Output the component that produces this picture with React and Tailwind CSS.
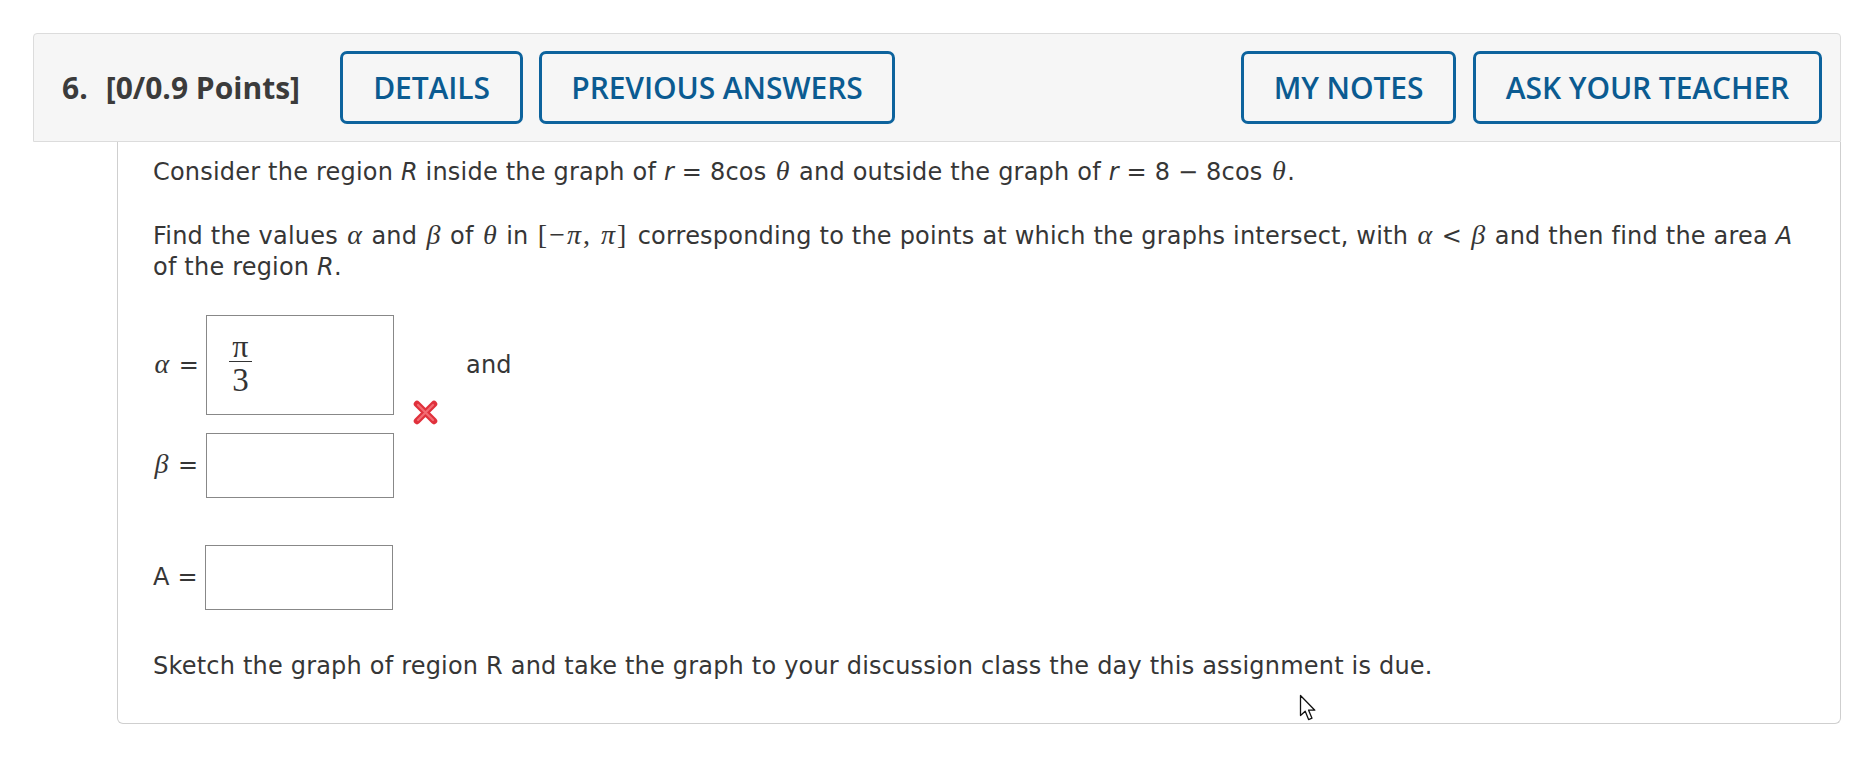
import React from "react";

const SANS = "font-['Open_Sans',sans-serif]";
const BODY = "font-['DejaVu_Sans','Verdana',sans-serif]";
const SERIF = "font-['Liberation_Serif','DejaVu_Serif',serif]";

function M({ children }) {
  return <i className={`${SERIF} mx-[1.5px] text-[28px] leading-none`}>{children}</i>;
}

function HeaderButton({ width, children }) {
  return (
    <button
      className={`${width} h-[73px] shrink-0 rounded-[7px] border-[3px] border-[#0d639d] bg-transparent text-[30px] font-semibold tracking-[-0.1px] text-[#0b5b91]`}
    >
      {children}
    </button>
  );
}

function AnswerBox({ height, children }) {
  return (
    <div className={`w-[188px] ${height} shrink-0 border border-[#888] bg-white flex items-center pl-[22px]`}>
      {children}
    </div>
  );
}

function WrongMark() {
  return (
    <svg width="27" height="25" viewBox="0 0 27 25" className="self-end -mb-[10px] ml-[18px]">
      <path d="M5 4 L22 21 M22 4 L5 21" stroke="#e0313c" strokeWidth="6.5" strokeLinecap="round" />
      <path d="M6 5 L21 20 M21 5 L6 20" stroke="#f26b72" strokeWidth="2.2" strokeLinecap="round" />
    </svg>
  );
}

function Cursor() {
  return (
    <svg width="19" height="29" viewBox="0 0 19 29" className="absolute left-[1181px] top-[552px]">
      <path
        d="M1.5 1.5 L1.5 21.5 L6.2 17.3 L9.6 25.6 L13 24.2 L9.6 16.2 L15.8 16.2 Z"
        fill="#fff"
        stroke="#111"
        strokeWidth="1.3"
        strokeLinejoin="round"
      />
    </svg>
  );
}

export default function App() {
  return (
    <div className="min-h-[757px] bg-white pt-[33px] pl-[33px] pr-[19px]">
      <div className={`h-[109px] rounded-t-[4px] border border-[#dcdcdc] bg-[#f6f6f6] flex items-center pl-[28px] pr-[18px] ${SANS}`}>
        <div className="text-[30px] font-bold text-[#3b3b3b] whitespace-nowrap">
          6.<span className="ml-[18px]">[0/0.9 Points]</span>
        </div>
        <div className="ml-[40px] flex gap-[16px]">
          <HeaderButton width="w-[183px]">DETAILS</HeaderButton>
          <HeaderButton width="w-[356px]">PREVIOUS ANSWERS</HeaderButton>
        </div>
        <div className="ml-auto flex gap-[17px]">
          <HeaderButton width="w-[215px]">MY NOTES</HeaderButton>
          <HeaderButton width="w-[349px]">ASK YOUR TEACHER</HeaderButton>
        </div>
      </div>

      <div
        className={`relative ml-[84px] rounded-b-[6px] border-x border-b border-[#cfcfcf] px-[35px] pt-[15px] pb-[41px] text-[24px] leading-[31px] tracking-[0.2px] text-[#363636] ${BODY}`}
      >
        <p>
          Consider the region <i>R</i> inside the graph of <i>r</i> = 8cos <M>θ</M> and outside the graph of{" "}
          <i>r</i> = 8 − 8cos <M>θ</M>.
        </p>
        <p className="mt-[31px]">
          <span className="whitespace-nowrap">
            Find the values <M>α</M> and <M>β</M> of <M>θ</M> in{" "}
            <span className={`${SERIF} mx-[1.5px] text-[28px] tracking-[2px]`}>
              [−<i>π</i>, <i>π</i>]
            </span>{" "}
            corresponding to the points at which the graphs intersect, with <M>α</M> &lt; <M>β</M> and then find the
            area <i>A</i>
          </span>
          <br />
          of the region <i>R</i>.
        </p>

        <div className="mt-[32px] flex items-center">
          <div className="w-[53px] shrink-0 whitespace-nowrap">
            <M>α</M> =
          </div>
          <AnswerBox height="h-[100px]">
            <div className={`${SERIF} flex flex-col items-center text-[#333]`}>
              <span className="text-[32px] leading-[24px]">π</span>
              <span className="mt-[3px] h-px w-[23px] bg-[#333]" />
              <span className="mt-[2px] text-[33px] leading-[32px]">3</span>
            </div>
          </AnswerBox>
          <WrongMark />
          <span className="ml-[27px]">and</span>
        </div>

        <div className="mt-[18px] flex items-center">
          <div className="w-[53px] shrink-0 whitespace-nowrap">
            <M>β</M> =
          </div>
          <AnswerBox height="h-[65px]" />
        </div>

        <div className="mt-[47px] flex items-center">
          <div className="w-[52px] shrink-0 whitespace-nowrap">A =</div>
          <AnswerBox height="h-[65px]" />
        </div>

        <p className="mt-[41px]">
          Sketch the graph of region R and take the graph to your discussion class the day this assignment is due.
        </p>

        <Cursor />
      </div>
    </div>
  );
}
